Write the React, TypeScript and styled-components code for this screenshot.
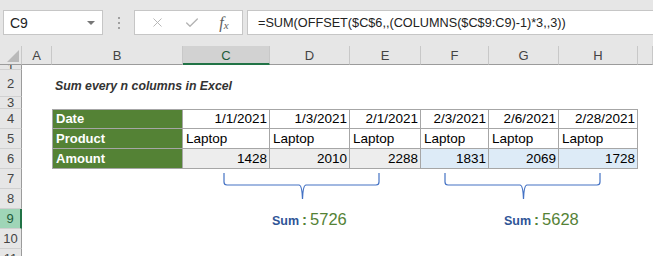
import styled, { createGlobalStyle } from 'styled-components';
import { X, Check } from 'lucide-react';

const GlobalStyle = createGlobalStyle`
  body {
    margin: 0;
    overflow: hidden;
    background: #fff;
    font-family: "Liberation Sans", Arial, sans-serif;
  }
`;

const columns = ['A', 'B', 'C', 'D', 'E', 'F', 'G', 'H', ''];
const colWidths = [30, 131, 87, 80, 71, 68, 70, 79];
const rowHeights = [5, 27, 12, 20, 20, 20, 20, 20, 20, 20, 20];

const dates = ['1/1/2021', '1/3/2021', '2/1/2021', '2/3/2021', '2/6/2021', '2/28/2021'];
const amounts = [1428, 2010, 2288, 1831, 2069, 1728];

type Kind = 'plain' | 'label' | 'value' | 'gray' | 'blue' | 'title';

interface CellData {
  text?: string;
  kind: Kind;
  right?: boolean;
  first?: boolean;
  top?: boolean;
}

const getCell = (row: number, col: number): CellData => {
  if (row === 2 && col === 1) return { text: 'Sum every n columns in Excel', kind: 'title' };
  if (row < 4 || row > 6 || col < 1 || col > 7) return { kind: 'plain' };
  const first = col === 1;
  const top = row === 4;
  if (first) {
    const labels = ['Date', 'Product', 'Amount'];
    return { text: labels[row - 4], kind: 'label', first, top };
  }
  const i = col - 2;
  if (row === 4) return { text: dates[i], kind: 'value', right: true, top };
  if (row === 5) return { text: 'Laptop', kind: 'value' };
  return { text: String(amounts[i]), kind: i < 3 ? 'gray' : 'blue', right: true };
};

const App = () => {
  return (
    <>
      <GlobalStyle />
      <Window>
        <FormulaBar>
          <NameBox>
            C9
            <DropArrow />
          </NameBox>
          <Grip>
            <span />
            <span />
            <span />
          </Grip>
          <FxBox>
            <X size={15} strokeWidth={1.5} color="#b3b3b3" />
            <Check size={16} strokeWidth={2} color="#b3b3b3" />
            <FxMark>
              f<sub>x</sub>
            </FxMark>
          </FxBox>
          <FormulaInput>=SUM(OFFSET($C$6,,(COLUMNS($C$9:C9)-1)*3,,3))</FormulaInput>
        </FormulaBar>

        <Sheet>
          <Corner />
          {columns.map((c, i) => (
            <ColHead key={i} $active={c === 'C'}>
              {c}
            </ColHead>
          ))}
          {rowHeights.map((_, r) => {
            const row = r + 1;
            return [
              <RowHead key={`h${row}`} $active={row === 9}>
                {row}
              </RowHead>,
              ...columns.map((_, col) => {
                const cell = getCell(row, col);
                return (
                  <Cell
                    key={`${row}-${col}`}
                    $kind={cell.kind}
                    $right={cell.right}
                    $first={cell.first}
                    $top={cell.top}
                  >
                    {cell.text}
                  </Cell>
                );
              }),
            ];
          })}

          <Brace style={{ left: 223, top: 127 }} width={158} height={27} viewBox="0 0 158 27">
            <path d="M1 0 V9 Q1 12 4 12 H76 Q79 12 79.5 26 Q80 12 83 12 H153 Q156 12 156 9 V0" />
          </Brace>
          <Brace style={{ left: 444, top: 127 }} width={158} height={27} viewBox="0 0 158 27">
            <path d="M1 0 V9 Q1 12 4 12 H76 Q79 12 79.5 26 Q80 12 83 12 H153 Q156 12 156 9 V0" />
          </Brace>

          <SumLabel style={{ left: 272, top: 164 }}>
            <SumWord>Sum</SumWord>
            <SumColon>:</SumColon>
            <SumValue>5726</SumValue>
          </SumLabel>
          <SumLabel style={{ left: 504, top: 164 }}>
            <SumWord>Sum</SumWord>
            <SumColon>:</SumColon>
            <SumValue>5628</SumValue>
          </SumLabel>
        </Sheet>
      </Window>
    </>
  );
};

const Window = styled.div`
  width: 653px;
  height: 256px;
  overflow: hidden;
  display: flex;
  flex-direction: column;
  background: #fff;
`;

const FormulaBar = styled.div`
  height: 46px;
  flex: none;
  box-sizing: border-box;
  background: #e6e6e6;
  display: flex;
  align-items: flex-start;
  padding: 10px 0 0 3px;
`;

const BarBox = styled.div`
  height: 25px;
  box-sizing: border-box;
  background: #fff;
  border: 1px solid #c6c6c6;
  display: flex;
  align-items: center;
  color: #222;
`;

const NameBox = styled(BarBox)`
  width: 100px;
  padding: 0 6px 0 6px;
  font-size: 14px;
  justify-content: space-between;
`;

const DropArrow = styled.span`
  width: 0;
  height: 0;
  border-left: 4px solid transparent;
  border-right: 4px solid transparent;
  border-top: 4px solid #777;
  margin-right: 1px;
`;

const Grip = styled.div`
  width: 31px;
  height: 25px;
  display: flex;
  flex-direction: column;
  align-items: center;
  justify-content: center;
  gap: 3px;

  span {
    width: 2px;
    height: 2px;
    background: #a0a0a0;
  }
`;

const FxBox = styled(BarBox)`
  width: 109px;
  justify-content: space-around;
  padding: 0 4px 0 6px;
`;

const FxMark = styled.span`
  font-family: "Liberation Serif", "Times New Roman", serif;
  font-style: italic;
  font-size: 16px;
  color: #606060;

  sub {
    font-size: 11px;
    vertical-align: -1px;
  }
`;

const FormulaInput = styled(BarBox)`
  flex: 1;
  margin-left: 4px;
  border-right: none;
  padding-left: 10px;
  font-size: 12.7px;
  white-space: nowrap;
`;

const Sheet = styled.div`
  position: relative;
  flex: 1;
  display: grid;
  grid-template-columns: 22px ${colWidths.map((w) => `${w}px`).join(' ')} 1fr;
  grid-template-rows: 19px ${rowHeights.map((h) => `${h}px`).join(' ')};
  background: #fff;
`;

const Corner = styled.div`
  position: relative;
  background: #e6e6e6;
  border-right: 1px solid #c8c8c8;
  border-bottom: 1px solid #9b9b9b;
  box-sizing: border-box;

  &::after {
    content: '';
    position: absolute;
    right: 2px;
    bottom: 2px;
    width: 0;
    height: 0;
    border-left: 12px solid transparent;
    border-bottom: 12px solid #b9b9b9;
  }
`;

const ColHead = styled.div<{ $active?: boolean }>`
  box-sizing: border-box;
  background: ${(p) => (p.$active ? '#d2d2d2' : '#e6e6e6')};
  border-right: 1px solid #c8c8c8;
  border-bottom: ${(p) => (p.$active ? '2px solid #217346' : '1px solid #9b9b9b')};
  color: ${(p) => (p.$active ? '#1f5c3a' : '#444')};
  font-size: 13px;
  display: flex;
  align-items: center;
  justify-content: center;
  padding-top: ${(p) => (p.$active ? '1px' : '0')};
`;

const RowHead = styled.div<{ $active?: boolean }>`
  box-sizing: border-box;
  background: ${(p) => (p.$active ? '#9fd5b7' : '#e6e6e6')};
  border-right: ${(p) => (p.$active ? '2px solid #217346' : '1px solid #9b9b9b')};
  border-bottom: 1px solid #d0d0d0;
  color: ${(p) => (p.$active ? '#1f5c3a' : '#444')};
  font-size: 13px;
  display: flex;
  align-items: center;
  justify-content: center;
  overflow: hidden;
  line-height: 1;
`;

const cellBg: Record<Kind, string> = {
  plain: 'transparent',
  title: 'transparent',
  label: '#548235',
  value: '#fff',
  gray: '#ededed',
  blue: '#ddebf7',
};

const Cell = styled.div<{ $kind: Kind; $right?: boolean; $first?: boolean; $top?: boolean }>`
  box-sizing: border-box;
  min-width: 0;
  display: flex;
  align-items: flex-end;
  justify-content: ${(p) => (p.$right ? 'flex-end' : 'flex-start')};
  padding: 0 2px 1px 3px;
  white-space: nowrap;
  line-height: 17px;
  background: ${(p) => cellBg[p.$kind]};
  color: ${(p) => (p.$kind === 'label' ? '#fff' : '#000')};
  font-size: ${(p) => (p.$kind === 'label' ? '13px' : '13.5px')};
  font-weight: ${(p) => (p.$kind === 'label' ? 700 : 400)};
  ${(p) =>
    p.$kind !== 'plain' && p.$kind !== 'title'
      ? `border-right: 1px solid #a6a6a6; border-bottom: 1px solid #a6a6a6;`
      : ''}
  ${(p) => (p.$first ? 'border-left: 1px solid #a6a6a6;' : '')}
  ${(p) => (p.$top ? 'border-top: 1px solid #a6a6a6;' : '')}
  ${(p) =>
    p.$kind === 'title'
      ? `overflow: visible; font-size: 12.3px; font-weight: 700; font-style: italic; color: #333; padding-bottom: 2px;`
      : ''}
`;

const Brace = styled.svg`
  position: absolute;
  overflow: visible;

  path {
    fill: none;
    stroke: #4472c4;
    stroke-width: 1.2;
  }
`;

const SumLabel = styled.div`
  position: absolute;
  display: flex;
  align-items: baseline;
  white-space: nowrap;
`;

const SumWord = styled.span`
  font-size: 12.5px;
  font-weight: 700;
  color: #2f5597;
`;

const SumColon = styled.span`
  font-size: 15px;
  font-weight: 700;
  color: #548235;
  margin: 0 3px 0 3px;
`;

const SumValue = styled.span`
  font-size: 16.5px;
  color: #548235;
`;

export default App;
